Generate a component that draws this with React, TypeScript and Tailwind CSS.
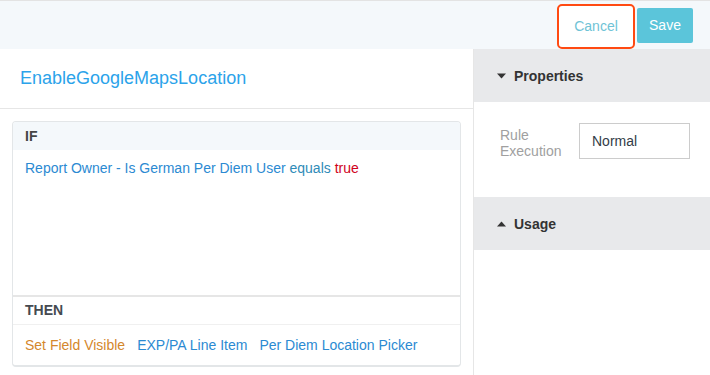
import React from "react";

const Caret = ({ up }: { up?: boolean }) => (
  <svg width="9" height="6" viewBox="0 0 9 6" className="mr-[8px]">
    {up ? <polygon points="0,5.5 9,5.5 4.5,0.5" fill="#333" /> : <polygon points="0,0.5 9,0.5 4.5,5.5" fill="#333" />}
  </svg>
);

export default function App() {
  return (
    <div className="w-[710px] h-[375px] flex flex-col bg-white border-t border-[#e3e3e3] overflow-hidden" style={{ fontFamily: '"Liberation Sans", Arial, sans-serif' }}>
      <div className="h-[48px] shrink-0 bg-[#f4f8fb] flex items-center justify-end pr-[17px] gap-[2px]">
        <button className="w-[78px] h-[45px] mt-[2px] rounded-[5px] border-2 border-[#ff4a12] bg-white text-[14px] text-[#6fc3d6] flex items-center justify-center">
          Cancel
        </button>
        <button className="w-[56px] h-[35px] rounded-[2px] bg-[#5bc5da] text-white text-[14px] flex items-center justify-center">
          Save
        </button>
      </div>
      <div className="flex flex-1">
        <div className="w-[474px] border-r border-[#e6e6e6] flex flex-col">
          <div className="h-[60px] border-b border-[#e6e6e6] flex items-center pl-[20px] text-[18px] text-[#2ba3ea]">
            EnableGoogleMapsLocation
          </div>
          <div className="mt-[12px] ml-[12px] w-[449px] border border-[#e3e6e8] border-b-2 rounded-[4px] flex flex-col overflow-hidden">
            <div className="h-[28px] bg-[#f4f8fb] flex items-center pl-[12px] text-[14px] font-bold text-[#454545]">IF</div>
            <div className="h-[145px] pl-[12px] pt-[8px] text-[14px] text-[#2b8ad2]">
              Report Owner - Is German Per Diem User <span className="text-[#2f8bb8]">equals</span>{" "}
              <span className="text-[#d0021b]">true</span>
            </div>
            <div className="h-[2px] bg-[#e6e6e6]" />
            <div className="h-[28px] border-b border-[#f0f0f0] flex items-center pl-[12px] text-[14px] font-bold text-[#454a50]">THEN</div>
            <div className="h-[40px] flex items-center pl-[12px] text-[14px] gap-[12px]">
              <span className="text-[#d4872c]">Set Field Visible</span>
              <span className="text-[#2b8ad2]">EXP/PA Line Item</span>
              <span className="text-[#2b8ad2]">Per Diem Location Picker</span>
            </div>
          </div>
        </div>
        <div className="flex-1 flex flex-col">
          <div className="h-[53px] bg-[#e8e9eb] flex items-center pl-[23px] pt-[1px] text-[14px] font-bold text-[#333]">
            <Caret />
            Properties
          </div>
          <div className="h-[95px] flex items-start pl-[26px] pt-[21px]">
            <div className="w-[79px] text-[14px] leading-[16px] text-[#a0a0a0] pt-[4px]">
              Rule
              <br />
              Execution
            </div>
            <div className="w-[111px] h-[36px] border border-[#cccccc] flex items-center pl-[12px] text-[14px] text-[#333d47]">
              Normal
            </div>
          </div>
          <div className="h-[53px] bg-[#e8e9eb] flex items-center pl-[23px] pt-[1px] text-[14px] font-bold text-[#333]">
            <Caret up />
            Usage
          </div>
        </div>
      </div>
    </div>
  );
}
